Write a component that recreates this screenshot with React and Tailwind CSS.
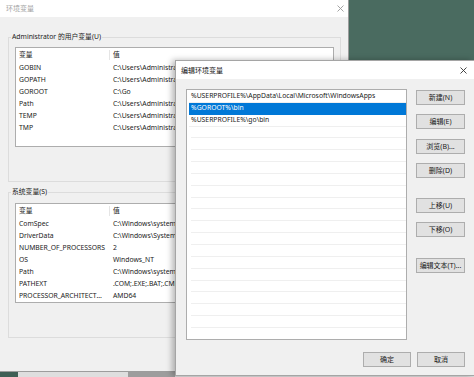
import React from "react";

const userVars = [
  ["GOBIN", "C:\\Users\\Administrator\\go\\bin"],
  ["GOPATH", "C:\\Users\\Administrator\\go"],
  ["GOROOT", "C:\\Go"],
  ["Path", "C:\\Users\\Administrator\\AppData\\Local\\Microsoft\\WindowsApps"],
  ["TEMP", "C:\\Users\\Administrator\\AppData\\Local\\Temp"],
  ["TMP", "C:\\Users\\Administrator\\AppData\\Local\\Temp"],
];

const sysVars = [
  ["ComSpec", "C:\\Windows\\system32\\cmd.exe"],
  ["DriverData", "C:\\Windows\\System32\\Drivers\\DriverData"],
  ["NUMBER_OF_PROCESSORS", "2"],
  ["OS", "Windows_NT"],
  ["Path", "C:\\Windows\\system32;C:\\Windows"],
  ["PATHEXT", ".COM;.EXE;.BAT;.CMD;.VBS;.VBE"],
  ["PROCESSOR_ARCHITECTURE", "AMD64"],
];

const pathEntries = [
  "%USERPROFILE%\\AppData\\Local\\Microsoft\\WindowsApps",
  "%GOROOT%\\bin",
  "%USERPROFILE%\\go\\bin",
];

const CloseIcon = ({ className }) => (
  <svg width="7" height="7" viewBox="0 0 7 7" className={className}>
    <path d="M0.5 0.5L6.5 6.5M6.5 0.5L0.5 6.5" stroke="currentColor" strokeWidth="0.9" />
  </svg>
);

const VarList = ({ rows, className }) => (
  <div className={`bg-white border border-[#adadad] overflow-hidden ${className}`}>
    <div className="flex h-[14px] items-center">
      <div className="w-[94px] shrink-0 pl-[3px] border-r border-[#e5e5e5] leading-[10px]">变量</div>
      <div className="pl-[3px]">值</div>
    </div>
    {rows.map(([k, v]) => (
      <div key={k} className="flex h-[12px] items-center whitespace-nowrap">
        <div className="w-[94px] shrink-0 pl-[3px] pr-[4px] truncate leading-[12px]">{k}</div>
        <div className="pl-[3px]">{v}</div>
      </div>
    ))}
  </div>
);

const Button = ({ children, className = "" }) => (
  <div
    className={`h-[15px] flex items-center justify-center bg-[#e1e1e1] border border-[#adadad] text-[7px] text-[#1a1a1a] ${className}`}
  >
    {children}
  </div>
);

export default function App() {
  return (
    <div className="relative w-[474px] h-[377px] overflow-hidden bg-[#4a6b60] font-['Noto_Sans','Noto_Sans_CJK_SC',sans-serif] text-[6.8px] text-[#1a1a1a] leading-none flex flex-col">
      {/* background window */}
      <div className="w-[349px] h-[372px] shrink-0 bg-[#f0f0f0] border-r border-b border-[#9c9c9c] flex flex-col">
        <div className="h-[17px] shrink-0 bg-white flex items-center justify-between pl-[6px] pr-[4px]">
          <span className="text-[7px] text-[#a3a3a3]">环境变量</span>
          <CloseIcon className="text-[#9a9a9a]" />
        </div>
        <div className="pl-[8px] pr-[7px]">
          <fieldset className="mt-[15px] h-[150px] border border-[#dcdcdc] px-[6px]">
            <legend className="-ml-[4px] px-[1px] h-[10px] leading-[10px]">
              Administrator 的用户变量(U)
            </legend>
            <VarList rows={userVars} className="mt-[5px] h-[100px]" />
          </fieldset>
          <fieldset className="mt-[5px] h-[151px] border border-[#dcdcdc] px-[6px]">
            <legend className="-ml-[4px] px-[1px] h-[10px] leading-[10px]">系统变量(S)</legend>
            <VarList rows={sysVars} className="mt-[6px] h-[100px]" />
          </fieldset>
        </div>
      </div>
      <div className="flex h-[5px]">
        <div className="w-[18px] bg-[#3f5f55]" />
        <div className="w-[110px] bg-[#dedede]" />
        <div className="w-[47px] bg-[#9d9d9d]" />
        <div className="flex-1 bg-[#dedede]" />
      </div>

      {/* edit dialog */}
      <div className="absolute left-[175px] top-[60px] w-[299px] h-[316px] bg-[#f0f0f0] border-t border-l border-b border-[#a5a5a5] shadow-[-3px_0_6px_rgba(0,0,0,0.28)] flex flex-col">
        <div className="h-[18px] shrink-0 bg-white flex items-center justify-between pl-[5px] pr-[7px]">
          <span className="text-[7px] text-[#111]">编辑环境变量</span>
          <CloseIcon className="text-[#333]" />
        </div>
        <div className="flex pl-[10px] pt-[10px]">
          <div className="w-[221px] h-[251px] bg-white border border-[#adadad] overflow-hidden pt-[1px] pl-[2px]">
            {pathEntries.map((p, i) => (
              <div
                key={p}
                className={`h-[11.85px] flex items-center pl-[2px] whitespace-nowrap border-b ${
                  i === 1 ? "bg-[#0078d7] text-white border-[#0078d7]" : "border-[#efefef]"
                }`}
              >
                {p}
              </div>
            ))}
            {Array.from({ length: 18 }).map((_, i) => (
              <div key={i} className="h-[11.85px] ml-[2px] border-b border-[#efefef]" />
            ))}
          </div>
          <div className="ml-[9px] w-[49px] flex flex-col">
            <Button className="mt-[1px]">新建(N)</Button>
            <Button className="mt-[9px]">编辑(E)</Button>
            <Button className="mt-[10px]">浏览(B)...</Button>
            <Button className="mt-[9px]">删除(D)</Button>
            <Button className="mt-[20px]">上移(U)</Button>
            <Button className="mt-[9px]">下移(O)</Button>
            <Button className="mt-[21px]">编辑文本(T)...</Button>
          </div>
        </div>
        <div className="flex justify-end gap-[6px] pr-[9px] mt-[12px]">
          <Button className="w-[48px] border-[#0078d7]">确定</Button>
          <Button className="w-[48px]">取消</Button>
        </div>
      </div>
    </div>
  );
}
